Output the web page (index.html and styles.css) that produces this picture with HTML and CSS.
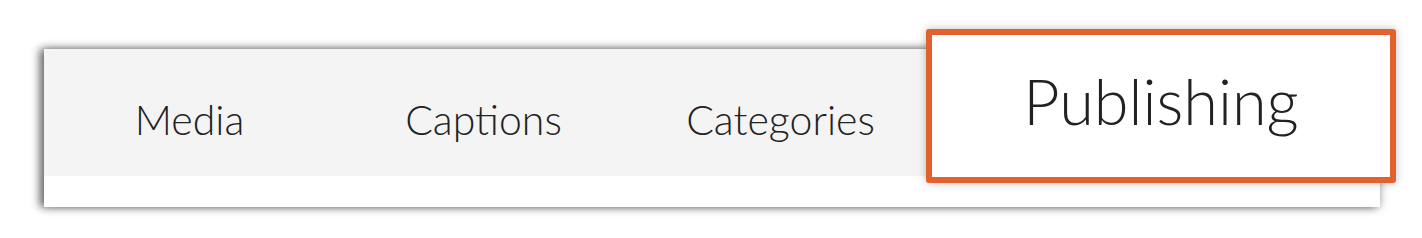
FILE: index.html
```html
<!DOCTYPE html>
<html lang="en">
<head>
  <meta charset="UTF-8">
  <title>Publishing tab</title>
  <link rel="stylesheet" href="styles.css">
</head>
<body>
  <div class="stage">
    <div class="panel">
      <div class="tabs">
        <div class="tab">Media</div>
        <div class="tab">Captions</div>
        <div class="tab">Categories</div>
        <div class="tab"></div>
      </div>
      <div class="panel-body"></div>
    </div>
    <!-- zoomed callout over the active tab -->
    <div class="callout">Publishing</div>
  </div>
</body>
</html>
```

FILE: styles.css
```css
body {
  margin: 0;
  background: #fff;
  font-family: Lato, "Noto Sans", sans-serif;
  color: #222;
}
.stage {
  position: relative;
  width: 1422px;
  height: 238px;
  padding: 49px 0 0 44px;
  box-sizing: border-box;
}
.panel {
  width: 1336px;
  background: #fff;
  box-shadow: -5px 0 8px rgba(0, 0, 0, 0.45), 0 0 9px rgba(0, 0, 0, 0.35);
}
.tabs {
  display: flex;
  height: 127px;
  background: #f4f4f4;
}
.tab {
  width: 297px;
  display: flex;
  align-items: center;
  justify-content: center;
  font-size: 41px;
  font-weight: 300;
  padding-top: 14px;
}
.tab:first-child {
  width: 291px;
}
.panel-body {
  height: 31px;
}
.callout {
  position: absolute;
  left: 926px;
  top: 29px;
  width: 470px;
  height: 154px;
  box-sizing: border-box;
  border: 6px solid #e2622f;
  border-radius: 3px;
  background: #fff;
  box-shadow: 0 0 8px rgba(0, 0, 0, 0.25);
  display: flex;
  align-items: center;
  justify-content: center;
  font-size: 63px;
  font-weight: 300;
  padding-bottom: 12px;
}
```
